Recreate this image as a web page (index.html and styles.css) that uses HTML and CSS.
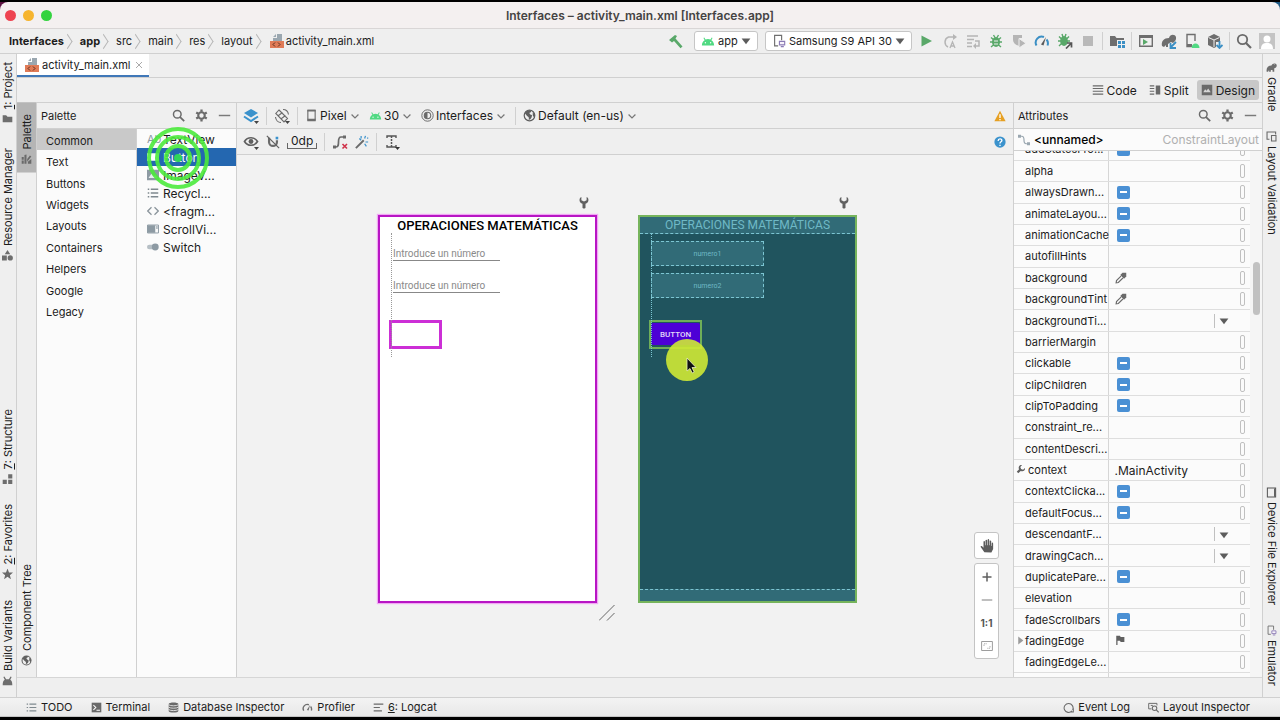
FILE: index.html
```
<!DOCTYPE html>
<html lang="en">
<head>
  <meta charset="UTF-8">
  <meta name="viewport" content="width=device-width, initial-scale=1.0">
  <title>Interfaces – activity_main.xml [Interfaces.app]</title>
  <link rel="stylesheet" href="styles.css">
</head>
<body>
  <!-- icons -->
  <svg class="sprite" aria-hidden="true">
    <symbol id="i-xml" viewBox="0 0 16 16"><path fill="#9aa7b0" d="M8 1h5v8H4V5h4zM7 1L4 4h3z"/><path fill="#e07b57" d="M1 8h14v7H1z"/><path fill="none" stroke="#5a2d1c" d="M6 9.500L4 11.500L6 13.500M9 9.500L11 11.500L9 13.500"/></symbol>
    <symbol id="i-android" viewBox="0 0 16 16"><path fill="#50d982" d="M1 13c0-3 1.500-5 3.200-6L2.800 4.500l.9-.5 1.500 2.400a7.500 7.500 0 0 1 5.600 0L12.300 4l.9.500L11.800 7C13.500 8 15 10 15 13z"/><circle cx="5" cy="10" r=".8" fill="#fff"/><circle cx="11" cy="10" r=".8" fill="#fff"/></symbol>
    <symbol id="i-hammer" viewBox="0 0 16 16"><path fill="#59a869" d="M1 7l6-5 2 1-1.500 2.500 7 8-2 1.800L6 8 4 9.500z"/></symbol>
    <symbol id="i-phone" viewBox="0 0 16 16"><path fill="none" stroke="#6e6e6e" stroke-width="1.400" d="M3.500 1.700h9v12.600h-9z"/><path fill="#6e6e6e" d="M3 1h10v2H3zM3 12h10v2H3z"/></symbol>
    <symbol id="i-vphone" viewBox="0 0 16 16"><path fill="none" stroke="#6e6e6e" stroke-width="1.300" d="M7 13.500H3v-12h8V7"/><path fill="#f7f3fb" stroke="#8b7bb5" stroke-width="1.300" d="M8.500 8.500h6v4h-6zM10 14.500h3.500"/></symbol>
    <symbol id="i-play" viewBox="0 0 16 16"><path fill="#59a869" d="M2.500 2.500v11L13 8z"/></symbol>
    <symbol id="i-rerun" viewBox="0 0 16 16"><path fill="none" stroke="#b5b5b5" stroke-width="1.500" d="M6 14A5.500 5.500 0 0 1 6.500 4H12"/><path fill="#b5b5b5" d="M11 1l4 3-4 3z"/><path fill="none" stroke="#b5b5b5" stroke-width="1.300" d="M8 15l2.500-6L13 15M9 13h3"/></symbol>
    <symbol id="i-apply" viewBox="0 0 16 16"><path fill="none" stroke="#b5b5b5" stroke-width="1.500" d="M2 3h11M2 6.500h7M2 10h5M2 13.500h5M10 8h4v5h-4"/><path fill="#b5b5b5" d="M11 10v6l-3-3z"/></symbol>
    <symbol id="i-bug" viewBox="0 0 16 16"><ellipse cx="8" cy="9" rx="4" ry="5" fill="#59a869"/><path fill="none" stroke="#59a869" stroke-width="1.400" d="M2 9h12M3 4.500l3 2.500M13 4.500L10 7M3 14l3-2.500M13 14l-3-2.500M5.500 2l1.500 2.500M10.500 2L9 4.500"/><path stroke="#efefef" d="M6 8h4M6 11h4"/></symbol>
    <symbol id="i-cover" viewBox="0 0 16 16"><path fill="#b5b5b5" d="M2 2h9v3H8v8C5 12 2 10 2 7z"/><path fill="#b5b5b5" stroke="#efefef" d="M8 5.500v9.500l7-4.700z"/></symbol>
    <symbol id="i-gauge" viewBox="0 0 16 16"><path fill="none" stroke="#3b8fc4" stroke-width="2" d="M2.500 12.500A6 6 0 0 1 10 4M12.500 6.500a6 6 0 0 1 1 6"/><path fill="#5b5b5b" d="M12 4L9.500 12.500 7 11.500z"/></symbol>
    <symbol id="i-gauge2" viewBox="0 0 16 16"><path fill="none" stroke="#6e6e6e" stroke-width="2" d="M2.500 12.500A6 6 0 0 1 10 4M12.500 6.500a6 6 0 0 1 1 6"/><path fill="#6e6e6e" d="M12 4L9.500 12.500 7 11.500z"/></symbol>
    <symbol id="i-attach" viewBox="0 0 16 16"><ellipse cx="7" cy="8" rx="3.800" ry="5" fill="#59a869"/><path fill="none" stroke="#59a869" stroke-width="1.400" d="M1 8h12M2 3.500L4.500 6M12 3.500L9.500 6M2 13l2.500-2.500M5 1l1 3M9 1L8 4"/><path fill="none" stroke="#555" stroke-width="1.700" d="M9 15.500l5-5M10 10h4.500v4.500"/></symbol>
    <symbol id="i-stop" viewBox="0 0 16 16"><path fill="#b9b9b9" d="M3 3h10v10H3z"/></symbol>
    <symbol id="i-folder" viewBox="0 0 16 16"><path fill="#6e6e6e" d="M1 3h5l2 2h7v8H1z"/></symbol>
    <symbol id="i-struct" viewBox="0 0 16 16"><path fill="#6e6e6e" d="M1 3h5l1.500 2H15v2H8v6H1z"/><path fill="#3b8fc4" d="M9 8h3v3H9zM13 8h3v3h-3zM9 12h3v3H9zM13 12h3v3h-3z"/></symbol>
    <symbol id="i-runwin" viewBox="0 0 16 16"><path fill="none" stroke="#6e6e6e" stroke-width="1.400" d="M1.700 3h12.600v10.300H1.700z"/><path fill="#6e6e6e" d="M1 2h14v3H1z"/><path fill="#59a869" d="M5 6v6l5-3z"/></symbol>
    <symbol id="i-elephant" viewBox="0 0 16 16"><path fill="#6e6e6e" d="M1 14C0 8 3 5 8 5c1-3.500 6-4 7.500-1C16 7 14 9 12 9v5H9.500v-2.500H7V14H4.500v-2.500L3 14zM11 4c1 .5 2 0 2.500-.8z"/></symbol>
    <symbol id="i-gradle" viewBox="0 0 16 16"><path fill="#6e6e6e" d="M1 13C0 8 3 5 8 5c1-4 6-4 7-1 .5 3-1 4-3 6l-2-1-3 2v3H5v-2L3 14z"/><path fill="none" stroke="#3b8fc4" stroke-width="1.800" d="M15 9l-5 5M9.500 10v5H15"/></symbol>
    <symbol id="i-avd" viewBox="0 0 16 16"><path fill="none" stroke="#6e6e6e" stroke-width="1.400" d="M7 13.500H3v-12h8V8"/><path fill="#6e6e6e" d="M3 11h5v3H3z"/><path fill="#50d982" d="M7.500 15c0-6 8-6 8 0z"/></symbol>
    <symbol id="i-sdk" viewBox="0 0 16 16"><path fill="#6e6e6e" d="M7 1l6 3v5H9v5L7 15l-6-3V4z"/><path stroke="#efefef" fill="none" d="M1.500 4.500L7 7l5.500-2.500M7 7v7"/><path fill="none" stroke="#3b8fc4" stroke-width="1.800" d="M12.500 8v7M9.500 12l3 3 3-3"/></symbol>
    <symbol id="i-search" viewBox="0 0 16 16"><circle cx="6.500" cy="6.500" r="4.700" fill="none" stroke="#6a6a6a" stroke-width="1.800"/><path stroke="#6a6a6a" stroke-width="2.200" d="M10 10l5 5"/></symbol>
    <symbol id="i-user" viewBox="0 0 16 16"><path fill="#c4c4c4" d="M0 0h16v16H0z"/><circle cx="8" cy="6" r="3.500" fill="#fff"/><path fill="#fff" d="M2 16c0-5 2.500-6 6-6s6 1 6 6z"/></symbol>
    <symbol id="i-gear" viewBox="0 0 16 16"><circle cx="8" cy="8" r="4" fill="none" stroke="#6a6a6a" stroke-width="2.600"/><path stroke="#6a6a6a" stroke-width="2.800" d="M8 .5v3M8 12.500v3M1.500 4.200l2.500 1.500M12 10.300l2.500 1.500M1.500 11.800L4 10.300M12 5.700l2.500-1.500"/></symbol>
    <symbol id="i-minus" viewBox="0 0 16 16"><path stroke="#7a7a7a" stroke-width="1.800" d="M1 8h14"/></symbol>
    <symbol id="i-plus" viewBox="0 0 16 16"><path stroke="#5f5f5f" stroke-width="2" d="M2 8h12M8 2v12"/></symbol>
    <symbol id="i-code" viewBox="0 0 16 16"><path stroke="#6a6a6a" stroke-width="1.400" d="M1 2.500h14M1 6h14M1 9.700h14M1 13.500h14"/></symbol>
    <symbol id="i-split" viewBox="0 0 16 16"><path stroke="#6a6a6a" stroke-width="1.400" d="M1 2.500h6M1 6h6M1 9.700h6M1 13.500h6"/><path fill="#6a6a6a" d="M9 2h6v12H9z"/></symbol>
    <symbol id="i-image" viewBox="0 0 16 16"><path fill="#6a6a6a" d="M1 1h14v14H1z"/><path fill="#d5d5d5" d="M3 11l2.500-4 2 2 2-3 1.500 2 2 3z"/></symbol>
    <symbol id="i-layers" viewBox="0 0 16 16"><path fill="#3b92cc" d="M8 1l7 4-7 4.500L1 5z"/><path fill="none" stroke="#3b92cc" stroke-width="2" d="M1 8.500L8 13l7-4.500"/><path fill="#444" d="M11 13h5l-2.500 3z"/></symbol>
    <symbol id="i-rotate" viewBox="0 0 16 16"><path fill="none" stroke="#6a6a6a" stroke-width="1.100" d="M5 2l8.500 8.500-3.500 3.500L1.800 5.500zM9 1.500c3 0 5 2 5.500 5M1.500 9c.3 3 2.500 5.500 5.500 5.500M4.500 7.500l4-3M7.500 10.500l4-3"/><path fill="#444" d="M11 13h5l-2.500 3z"/></symbol>
    <symbol id="i-theme" viewBox="0 0 16 16"><circle cx="8" cy="8" r="7" fill="none" stroke="#6a6a6a" stroke-width="1.200"/><circle cx="8" cy="8" r="4" fill="none" stroke="#6a6a6a" stroke-width="1.300"/><path fill="#6a6a6a" d="M8 4v8a4 4 0 0 1 0-8z"/></symbol>
    <symbol id="i-globe" viewBox="0 0 16 16"><circle cx="8" cy="8" r="6.500" fill="#efefef" stroke="#606060" stroke-width="1.500"/><path fill="#606060" d="M2 5c2-4 7-4 8-3 .5 2-1 2-2 2.500 0 2 1 2 3 3 0 2 0 3-2 5l-2 1c1-4-1-4-2-5zM12 4l3 3-1 4-2-3z"/></symbol>
    <symbol id="i-chev" viewBox="0 0 16 16"><path fill="none" stroke="#777" stroke-width="2" d="M2.500 5.500L8 11l5.500-5.500"/></symbol>
    <symbol id="i-tri" viewBox="0 0 16 16"><path fill="#5c5c5c" d="M1 4h14L8 13z"/></symbol>
    <symbol id="i-eye" viewBox="0 0 16 16"><path fill="none" stroke="#606060" stroke-width="1.700" d="M1.500 7.500c3-5 10-5 13 0-3 5-10 5-13 0z"/><circle cx="8" cy="7.500" r="2.400" fill="#606060"/><path fill="#444" d="M11 13h5l-2.500 3z"/></symbol>
    <symbol id="i-magnet" viewBox="0 0 16 16"><path fill="none" stroke="#6a6a6a" stroke-width="2.500" d="M3.500 3v5c0 6 9 6 9 0V6"/><path fill="#3b92cc" d="M11 2h3v3h-3z"/><path stroke="#606060" stroke-width="1.500" d="M1 1l14 14"/></symbol>
    <symbol id="i-clear" viewBox="0 0 16 16"><path fill="none" stroke="#6a6a6a" stroke-width="1.700" d="M2 13h2c5 0 0-10 5-10h3"/><path stroke="#d0324a" stroke-width="1.600" d="M10.500 10l4.500 4.500M15 10l-4.500 4.500"/><path fill="#6a6a6a" d="M1 11.500h3v3H1zM11 1.500h3v3h-3z"/></symbol>
    <symbol id="i-wand" viewBox="0 0 16 16"><path stroke="#6a6a6a" stroke-width="2.200" d="M1 15l9-9"/><path stroke="#3b92cc" stroke-width="1.400" d="M7 1v3M12 1l-1 3M12 8h3M11 10l2 3M14 4l1-1M5 4l2 2"/></symbol>
    <symbol id="i-guide" viewBox="0 0 16 16"><path fill="none" stroke="#555" stroke-width="1.400" d="M3 4V2h9v2M3 11v2h9v-2"/><path fill="none" stroke="#555" stroke-width="1.500" stroke-dasharray="2 1" d="M7.500 2v11"/><path fill="#333" d="M11 13h5l-2.500 3z"/></symbol>
    <symbol id="i-warn" viewBox="0 0 16 16"><path fill="#e6a023" d="M8 1l7.500 14H.5z"/><path stroke="#fff" stroke-width="1.800" d="M8 5.500v5M8 12v1.800"/></symbol>
    <symbol id="i-help" viewBox="0 0 16 16"><circle cx="8" cy="8" r="7.500" fill="#3b92cc"/><path fill="none" stroke="#fff" stroke-width="1.800" d="M5.500 6.500c0-3.500 5-3.500 5-.5 0 2-2.500 1.500-2.500 4M8 11.500v1.800"/></symbol>
    <symbol id="i-wrench" viewBox="0 0 16 16"><path fill="#606060" d="M4.500.5C1 2 1 8 6 9.500V15c0 1.300 4 1.300 4 0V9.500C15 8 15 2 11.500.5V5L8 6.500 4.500 5z"/></symbol>
    <symbol id="i-constraint" viewBox="0 0 16 16"><path fill="none" stroke="#9aa7b0" stroke-width="1.600" d="M2 3h3c6 0 0 10 6 10h3"/><path fill="#9aa7b0" d="M0 1h4v4H0zM12 11h4v4h-4z"/></symbol>
    <symbol id="i-picker" viewBox="0 0 16 16"><path fill="#6a6a6a" d="M10 1h5v5l-3 3-5-5z"/><path fill="none" stroke="#6a6a6a" stroke-width="1.500" d="M8 5.500l-6 6L1.500 14.500 4.500 14l6-6"/></symbol>
    <symbol id="i-flag" viewBox="0 0 16 16"><path fill="#606060" d="M2 1h6l1 2h6v8H9L8 9H4v7H2z"/></symbol>
    <symbol id="i-hand" viewBox="0 0 16 16"><path fill="#5c5c5c" d="M5 15L.8 9.200c-.5-1 .8-1.700 1.600-.8L4 10V3.200c0-1.200 1.600-1.200 1.700 0V7h.6V1.700c0-1.300 1.700-1.300 1.800 0V7h.6V1c.1-1.300 1.700-1.300 1.800 0v6h.6V2.500c0-1.200 1.600-1.200 1.700 0L13 8l.5 0V5c0-1.200 1.500-1.200 1.500 0v6.500L13 15.500z"/></symbol>
    <symbol id="i-fit" viewBox="0 0 16 16"><path fill="none" stroke="#9a9a9a" stroke-width="1.300" d="M.8 2h14.400v12H.800z"/><path fill="none" stroke="#9a9a9a" stroke-dasharray="2 1" d="M4 8V5h4M12 8v3H8"/></symbol>
    <symbol id="i-list" viewBox="0 0 16 16"><path stroke="#7f898f" stroke-width="1.800" d="M1 3h2M5 3h10M1 8h2M5 8h10M1 13h2M5 13h10"/></symbol>
    <symbol id="i-angle" viewBox="0 0 16 16"><path fill="none" stroke="#8a949b" stroke-width="1.700" d="M6 3L1 8l5 5M10 3l5 5-5 5"/></symbol>
    <symbol id="i-scroll" viewBox="0 0 16 16"><path fill="none" stroke="#8d9aa3" stroke-width="1.300" d="M.7 2.700h14.600v10.600H.7z"/><path fill="#8d9aa3" d="M1 3h10v10H1zM12.500 4h1.500v4h-1.500z"/></symbol>
    <symbol id="i-switch" viewBox="0 0 16 16"><path fill="#b6bfc5" d="M3 5h7v6H3a3 3 0 0 1 0-6z"/><circle cx="11" cy="8" r="4.600" fill="#8d9aa3"/></symbol>
    <symbol id="i-btn" viewBox="0 0 16 16"><path fill="#fff" d="M0 3h16v10H0z"/></symbol>
    <symbol id="i-pic" viewBox="0 0 16 16"><path fill="#8d9aa3" d="M0 1h16v14H0z"/><path fill="#e9edef" d="M2 12l4-6 3 4 2-2 3 4z"/></symbol>
    <symbol id="i-res" viewBox="0 0 16 16"><path fill="#6e6e6e" d="M8 0l4 6H4zM0 8h7v7H0z"/><circle cx="12" cy="11.500" r="3.800" fill="#6e6e6e"/></symbol>
    <symbol id="i-blocks" viewBox="0 0 16 16"><path fill="#6e6e6e" d="M9 1h6v6H9zM1 9h6v6H1zM9 9h6v6H9z"/></symbol>
    <symbol id="i-star" viewBox="0 0 16 16"><path fill="#6a6a6a" d="M8 0l2.200 5.700 5.800.3-4.500 3.700L13 15.500 8 12.200 3 15.500l1.500-5.800L0 6l5.800-.3z"/></symbol>
    <symbol id="i-variants" viewBox="0 0 16 16"><path fill="#6e6e6e" d="M1 15c0-5 1-7 3-8L2 3l1.500-.8L6 6h4l2.500-3.800L14 3l-2 4c2 1 3 3 3 8z"/></symbol>
    <symbol id="i-swatch" viewBox="0 0 16 16"><path fill="#6a6a6a" d="M1 10h3v5H1zM1 5h3v4H1zM5 2l3-.5V15H5zM9 8l4-5 2 1.500L9 12zM10 12l5-4v7h-5z"/></symbol>
    <symbol id="i-layval" viewBox="0 0 16 16"><path fill="none" stroke="#6a6a6a" stroke-width="1.600" d="M5 12H1.500V1.500H14V5M8 6.500h6.500v8H8z"/></symbol>
    <symbol id="i-device" viewBox="0 0 16 16"><path fill="none" stroke="#555" stroke-width="1.500" d="M2 1.500h12v13H2z"/><path stroke="#555" stroke-width="1.500" d="M12.500 2v12"/></symbol>
    <symbol id="i-term" viewBox="0 0 16 16"><path fill="#6a6a6a" d="M1 1h14v14H1z"/><path fill="none" stroke="#fff" stroke-width="1.500" d="M3.500 4.500L7 8l-3.500 3.500M8 12h5"/></symbol>
    <symbol id="i-db" viewBox="0 0 16 16"><path fill="#6a6a6a" d="M1 3c0-3 14-3 14 0v10c0 3-14 3-14 0z"/><path fill="none" stroke="#efefef" stroke-width="1.200" d="M1 4c2 2 12 2 14 0M1 7.500c2 2 12 2 14 0M1 11c2 2 12 2 14 0"/></symbol>
    <symbol id="i-logcat" viewBox="0 0 16 16"><path stroke="#6a6a6a" stroke-width="1.800" d="M1 3h14M1 8h9M1 13h12"/></symbol>
    <symbol id="i-event" viewBox="0 0 16 16"><path fill="none" stroke="#6a6a6a" stroke-width="1.500" d="M13 13a6.500 6.500 0 1 1 1-1.500M10 14.500h5V9"/></symbol>
    <symbol id="i-inspect" viewBox="0 0 16 16"><path fill="none" stroke="#6a6a6a" stroke-width="1.400" d="M5 10H1V2h12v3M4 5h3"/><circle cx="9.500" cy="9" r="3.300" fill="none" stroke="#6a6a6a" stroke-width="1.500"/><path stroke="#6a6a6a" stroke-width="1.700" d="M12 11.500l3.500 3.500"/></symbol>
  </svg>

  <div class="window">
    <header class="titlebar">
      <div class="lights"><i class="red"></i><i class="yellow"></i><i class="green"></i></div>
      <h1>Interfaces – activity_main.xml [Interfaces.app]</h1>
    </header>

    <div class="navbar">
      <nav class="crumbs">
        <a href="#"><b>Interfaces</b></a>
        <a href="#"><b>app</b></a>
        <a href="#">src</a>
        <a href="#">main</a>
        <a href="#">res</a>
        <a href="#">layout</a>
        <a href="#"><svg class="ic"><use href="#i-xml"/></svg>activity_main.xml</a>
      </nav>
      <div class="tools">
        <button aria-label="Build"><svg class="ic"><use href="#i-hammer"/></svg></button>
        <div class="combo first">
          <svg class="ic"><use href="#i-android"/></svg>
          <select aria-label="Configuration"><option>app</option></select>
          <svg class="arrow"><use href="#i-tri"/></svg>
        </div>
        <div class="combo">
          <svg class="ic"><use href="#i-vphone"/></svg>
          <select aria-label="Device"><option>Samsung S9 API 30</option></select>
          <svg class="arrow"><use href="#i-tri"/></svg>
        </div>
        <button aria-label="Run"><svg class="ic"><use href="#i-play"/></svg></button>
        <button aria-label="Apply changes"><svg class="ic"><use href="#i-rerun"/></svg></button>
        <button aria-label="Apply code changes"><svg class="ic"><use href="#i-apply"/></svg></button>
        <button aria-label="Debug"><svg class="ic"><use href="#i-bug"/></svg></button>
        <button aria-label="Coverage"><svg class="ic"><use href="#i-cover"/></svg></button>
        <button aria-label="Profile"><svg class="ic"><use href="#i-gauge"/></svg></button>
        <button aria-label="Attach debugger"><svg class="ic"><use href="#i-attach"/></svg></button>
        <button aria-label="Stop"><svg class="ic"><use href="#i-stop"/></svg></button>
        <span class="sep"></span>
        <button aria-label="Project structure"><svg class="ic"><use href="#i-struct"/></svg></button>
        <span class="sep"></span>
        <button aria-label="Run window"><svg class="ic"><use href="#i-runwin"/></svg></button>
        <button aria-label="Sync Gradle"><svg class="ic"><use href="#i-gradle"/></svg></button>
        <button aria-label="AVD Manager"><svg class="ic"><use href="#i-avd"/></svg></button>
        <button aria-label="SDK Manager"><svg class="ic"><use href="#i-sdk"/></svg></button>
        <span class="sep"></span>
        <button aria-label="Search"><svg class="ic"><use href="#i-search"/></svg></button>
        <button aria-label="Account"><svg class="ic"><use href="#i-user"/></svg></button>
      </div>
    </div>

    <div class="workspace">
      <aside class="stripe left">
        <div class="group">
          <button><svg><use href="#i-folder"/></svg><span><u>1</u>: Project</span></button>
          <button><svg><use href="#i-res"/></svg><span>Resource Manager</span></button>
        </div>
        <button class="push"><svg><use href="#i-blocks"/></svg><span><u>7</u>: Structure</span></button>
        <button><svg><use href="#i-star"/></svg><span><u>2</u>: Favorites</span></button>
        <button><svg><use href="#i-variants"/></svg><span>Build Variants</span></button>
      </aside>

      <main class="editor">
        <div class="tabs">
          <div class="tab">
            <svg class="ic"><use href="#i-xml"/></svg>
            <a href="#">activity_main.xml</a>
            <button class="close" aria-label="Close"><svg viewBox="0 0 8 8"><path stroke="#aaa" d="M1 1l6 6M7 1L1 7"/></svg></button>
          </div>
        </div>
        <div class="modes">
          <button><svg><use href="#i-code"/></svg>Code</button>
          <button><svg><use href="#i-split"/></svg>Split</button>
          <button class="current"><svg><use href="#i-image"/></svg>Design</button>
        </div>

        <div class="panels">
          <aside class="stripe left inner">
            <button class="current"><svg><use href="#i-swatch"/></svg><span>Palette</span></button>
            <button class="push"><svg><use href="#i-globe"/></svg><span>Component Tree</span></button>
          </aside>

          <section class="palette">
            <div class="head">
              <h2>Palette</h2>
              <button aria-label="Search palette"><svg><use href="#i-search"/></svg></button>
              <button aria-label="Palette settings"><svg><use href="#i-gear"/></svg></button>
              <button aria-label="Hide palette"><svg><use href="#i-minus"/></svg></button>
            </div>
            <div class="lists">
              <ul class="groups">
                <li class="current">Common</li>
                <li>Text</li>
                <li>Buttons</li>
                <li>Widgets</li>
                <li>Layouts</li>
                <li>Containers</li>
                <li>Helpers</li>
                <li>Google</li>
                <li>Legacy</li>
              </ul>
              <ul class="items">
                <li><span class="ab">Ab</span>TextView</li>
                <li class="current"><svg><use href="#i-btn"/></svg>Button</li>
                <li><svg><use href="#i-pic"/></svg>ImageV...</li>
                <li><svg><use href="#i-list"/></svg>Recycl...</li>
                <li><svg><use href="#i-angle"/></svg>&lt;fragm...</li>
                <li><svg><use href="#i-scroll"/></svg>ScrollVi...</li>
                <li><svg><use href="#i-switch"/></svg>Switch</li>
              </ul>
              <!-- click ripple -->
              <svg class="ripple" viewBox="0 0 64 64"><g fill="none" stroke="#4bea3c" stroke-width="4" stroke-opacity=".9"><circle cx="32" cy="32" r="29"/><circle cx="32" cy="32" r="21"/><circle cx="32" cy="32" r="12"/></g><circle cx="32" cy="32" r="4" fill="#2fd65a"/></svg>
            </div>
          </section>

          <section class="design">
            <div class="bar">
              <button aria-label="Surface"><svg class="ic"><use href="#i-layers"/></svg></button>
              <span class="sep"></span>
              <button aria-label="Orientation"><svg class="ic"><use href="#i-rotate"/></svg></button>
              <span class="sep"></span>
              <div class="drop"><svg><use href="#i-phone"/></svg><select aria-label="Device type"><option>Pixel</option></select><svg class="chev"><use href="#i-chev"/></svg></div>
              <div class="drop"><svg><use href="#i-android"/></svg><select aria-label="API level"><option>30</option></select><svg class="chev"><use href="#i-chev"/></svg></div>
              <div class="drop"><svg><use href="#i-theme"/></svg><select aria-label="Theme"><option>Interfaces</option></select><svg class="chev"><use href="#i-chev"/></svg></div>
              <span class="sep"></span>
              <div class="drop"><svg><use href="#i-globe"/></svg><select aria-label="Locale"><option>Default (en-us)</option></select><svg class="chev"><use href="#i-chev"/></svg></div>
              <button class="end" aria-label="Warnings"><svg><use href="#i-warn"/></svg></button>
            </div>
            <div class="bar">
              <button aria-label="View options"><svg class="ic"><use href="#i-eye"/></svg></button>
              <button aria-label="Autoconnect"><svg class="mid"><use href="#i-magnet"/></svg></button>
              <button class="margin">0dp</button>
              <span class="sep"></span>
              <button aria-label="Clear constraints"><svg class="ic"><use href="#i-clear"/></svg></button>
              <button aria-label="Infer constraints"><svg class="mid"><use href="#i-wand"/></svg></button>
              <span class="sep"></span>
              <button aria-label="Guidelines"><svg class="ic"><use href="#i-guide"/></svg></button>
              <button class="end" aria-label="Help"><svg><use href="#i-help"/></svg></button>
            </div>

            <div class="canvas">
              <div class="screen">
                <svg class="wrench"><use href="#i-wrench"/></svg>
                <div class="phone preview">
                  <h3>OPERACIONES MATEMÁTICAS</h3>
                  <i class="guide"></i>
                  <input type="text" placeholder="Introduce un número" aria-label="numero1">
                  <input type="text" placeholder="Introduce un número" aria-label="numero2">
                  <div class="picked"></div>
                </div>
                <svg class="resize" viewBox="0 0 16 16"><path stroke="#666" d="M0 15.500L15.500 0M8 15.500L15.500 8"/></svg>
              </div>
              <div class="screen">
                <svg class="wrench"><use href="#i-wrench"/></svg>
                <div class="phone blueprint">
                  <h3>OPERACIONES MATEMÁTICAS</h3>
                  <i class="guide"></i>
                  <div class="box">numero1</div>
                  <div class="box">numero2</div>
                  <div class="picked"><button>BUTTON</button></div>
                  <div class="foot"></div>
                  <svg class="pointer" viewBox="0 0 42 42"><circle cx="21" cy="21" r="21" fill="#cfe935" fill-opacity=".9"/><path fill="#111" stroke="#e8f0c0" stroke-width=".8" d="M21 19v13l3-2.500 2.200 4.500 2-1-2.200-4.500h4z"/></svg>
                </div>
              </div>

              <div class="zoom">
                <div class="pad"><button aria-label="Pan"><svg class="mid"><use href="#i-hand"/></svg></button></div>
                <div class="pad">
                  <button aria-label="Zoom in"><svg><use href="#i-plus"/></svg></button>
                  <button aria-label="Zoom out"><svg class="off"><use href="#i-minus"/></svg></button>
                  <button>1:1</button>
                  <button aria-label="Zoom to fit"><svg><use href="#i-fit"/></svg></button>
                </div>
              </div>
            </div>
          </section>

          <section class="attributes">
            <div class="head">
              <h2>Attributes</h2>
              <button aria-label="Search attributes"><svg><use href="#i-search"/></svg></button>
              <button aria-label="Attribute settings"><svg><use href="#i-gear"/></svg></button>
              <button aria-label="Hide attributes"><svg><use href="#i-minus"/></svg></button>
            </div>
            <div class="component"><svg><use href="#i-constraint"/></svg><b>&lt;unnamed&gt;</b><span>ConstraintLayout</span></div>
            <div class="scroll">
              <table>
                <tr><th><label for="a0">addStatesFro...</label></th><td><input type="checkbox" id="a0"></td><td><button aria-label="Pick"></button></td></tr>
                <tr><th><label for="a1">alpha</label></th><td><input type="text" id="a1"></td><td><button aria-label="Pick"></button></td></tr>
                <tr><th><label for="a2">alwaysDrawn...</label></th><td><input type="checkbox" id="a2"></td><td><button aria-label="Pick"></button></td></tr>
                <tr><th><label for="a3">animateLayou...</label></th><td><input type="checkbox" id="a3"></td><td><button aria-label="Pick"></button></td></tr>
                <tr><th><label for="a4">animationCache</label></th><td><input type="checkbox" id="a4"></td><td><button aria-label="Pick"></button></td></tr>
                <tr><th><label for="a5">autofillHints</label></th><td><input type="text" id="a5"></td><td><button aria-label="Pick"></button></td></tr>
                <tr><th><label for="a6">background</label></th><td class="icon"><svg><use href="#i-picker"/></svg><input type="text" id="a6"></td><td><button aria-label="Pick"></button></td></tr>
                <tr><th><label for="a7">backgroundTint</label></th><td class="icon"><svg><use href="#i-picker"/></svg><input type="text" id="a7"></td><td><button aria-label="Pick"></button></td></tr>
                <tr><th><label for="a8">backgroundTi...</label></th><td colspan="2" class="choice"><select id="a8"><option></option></select><svg><use href="#i-tri"/></svg></td></tr>
                <tr><th><label for="a9">barrierMargin</label></th><td><input type="text" id="a9"></td><td><button aria-label="Pick"></button></td></tr>
                <tr><th><label for="a10">clickable</label></th><td><input type="checkbox" id="a10"></td><td><button aria-label="Pick"></button></td></tr>
                <tr><th><label for="a11">clipChildren</label></th><td><input type="checkbox" id="a11"></td><td><button aria-label="Pick"></button></td></tr>
                <tr><th><label for="a12">clipToPadding</label></th><td><input type="checkbox" id="a12"></td><td><button aria-label="Pick"></button></td></tr>
                <tr><th><label for="a13">constraint_re...</label></th><td><input type="text" id="a13"></td><td><button aria-label="Pick"></button></td></tr>
                <tr><th><label for="a14">contentDescri...</label></th><td><input type="text" id="a14"></td><td><button aria-label="Pick"></button></td></tr>
                <tr><th class="tool"><svg><use href="#i-wrench"/></svg><label for="a15">context</label></th><td><input type="text" id="a15" value=".MainActivity"></td><td><button aria-label="Pick"></button></td></tr>
                <tr><th><label for="a16">contextClicka...</label></th><td><input type="checkbox" id="a16"></td><td><button aria-label="Pick"></button></td></tr>
                <tr><th><label for="a17">defaultFocus...</label></th><td><input type="checkbox" id="a17"></td><td><button aria-label="Pick"></button></td></tr>
                <tr><th><label for="a18">descendantF...</label></th><td colspan="2" class="choice"><select id="a18"><option></option></select><svg><use href="#i-tri"/></svg></td></tr>
                <tr><th><label for="a19">drawingCach...</label></th><td colspan="2" class="choice"><select id="a19"><option></option></select><svg><use href="#i-tri"/></svg></td></tr>
                <tr><th><label for="a20">duplicatePare...</label></th><td><input type="checkbox" id="a20"></td><td><button aria-label="Pick"></button></td></tr>
                <tr><th><label for="a21">elevation</label></th><td><input type="text" id="a21"></td><td><button aria-label="Pick"></button></td></tr>
                <tr><th><label for="a22">fadeScrollbars</label></th><td><input type="checkbox" id="a22"></td><td><button aria-label="Pick"></button></td></tr>
                <tr><th class="tree"><svg><use href="#i-tri"/></svg><label for="a23">fadingEdge</label></th><td class="icon flag"><svg><use href="#i-flag"/></svg><input type="text" id="a23"></td><td><button aria-label="Pick"></button></td></tr>
                <tr><th><label for="a24">fadingEdgeLe...</label></th><td><input type="text" id="a24"></td><td><button aria-label="Pick"></button></td></tr>
                <tr><th></th><td></td><td><button aria-label="Pick"></button></td></tr>
              </table>
              <div class="track"><i></i></div>
            </div>
          </section>
        </div>
      </main>

      <aside class="stripe right">
        <button><svg><use href="#i-elephant"/></svg><span>Gradle</span></button>
        <button><svg><use href="#i-layval"/></svg><span>Layout Validation</span></button>
        <button class="push"><svg><use href="#i-device"/></svg><span>Device File Explorer</span></button>
        <button><svg><use href="#i-vphone"/></svg><span>Emulator</span></button>
      </aside>
    </div>

    <footer class="status">
      <button><svg><use href="#i-list"/></svg>TODO</button>
      <button><svg><use href="#i-term"/></svg>Terminal</button>
      <button><svg><use href="#i-db"/></svg>Database Inspector</button>
      <button><svg><use href="#i-gauge2"/></svg>Profiler</button>
      <button><svg><use href="#i-logcat"/></svg><span><u>6</u>: Logcat</span></button>
      <button class="push"><svg><use href="#i-event"/></svg>Event Log</button>
      <button><svg><use href="#i-inspect"/></svg>Layout Inspector</button>
    </footer>
  </div>
</body>
</html>
```

FILE: styles.css
```
* {
  margin: 0;
  padding: 0;
  box-sizing: border-box;
}
body {
  font-family: Inter, "Liberation Sans", sans-serif;
  font-size: 11px;
  color: #1c1c1c;
  background: linear-gradient(to right, #5a1040, #1f5a85);
}
button, select, input {
  font: inherit;
  color: inherit;
  border: 0;
  background: none;
  outline: 0;
}
select, input {
  appearance: none;
}
button {
  display: flex;
  align-items: center;
  white-space: nowrap;
}
a {
  color: inherit;
  text-decoration: none;
}
ul {
  list-style: none;
}
svg {
  display: block;
  flex: none;
  width: 12px;
  height: 12px;
}
.ic {
  width: 16px;
  height: 16px;
}
.mid {
  width: 14px;
  height: 14px;
}
.sprite {
  display: none;
}
.sep {
  width: 1px;
  height: 18px;
  background: #d0d0d0;
}
.push {
  margin-top: auto;
}

/* window */
.window {
  display: flex;
  flex-direction: column;
  height: 100vh;
  border-top: 2px solid #000;
  border-bottom: 3px solid #000;
}
.titlebar {
  display: grid;
  grid-template-columns: 1fr auto 1fr;
  align-items: center;
  height: 27px;
  padding: 0 5px;
  background: #f4f0f0;
  border-bottom: 1px solid #d9d6d6;
  border-radius: 8px 8px 0 0;
}
.titlebar h1 {
  font-size: 12px;
  font-weight: 600;
  color: #454343;
}
.lights {
  display: flex;
  gap: 7px;
}
.lights i {
  width: 11px;
  height: 11px;
  border-radius: 50%;
}
.lights .red { background: #ee4350; }
.lights .yellow { background: #f6b42e; }
.lights .green { background: #33d33f; }

/* navigation bar */
.navbar {
  display: flex;
  justify-content: space-between;
  align-items: center;
  height: 25px;
  padding: 0 5px 0 9px;
  background: #efefef;
  border-bottom: 1px solid #d0d0d0;
}
.crumbs {
  display: flex;
  align-items: center;
}
.crumbs a {
  display: flex;
  align-items: center;
  gap: 1px;
}
.crumbs a + a::before {
  content: "";
  width: 8px;
  height: 8px;
  margin: 0 7px 0 -1px;
  border: 1px solid #b5b5b5;
  border-width: 1px 1px 0 0;
  transform: rotate(45deg) skew(12deg, 12deg);
}
.tools {
  display: flex;
  align-items: center;
  gap: 7px;
}
.tools .sep {
  margin: 0 -1px;
}
.combo {
  display: flex;
  align-items: center;
  gap: 3px;
  height: 20px;
  padding: 0 6px;
  background: #fff;
  border: 1px solid #c6c6c6;
  border-radius: 3px;
}
.combo.first {
  margin-left: 3px;
}
.combo .ic {
  width: 14px;
  height: 14px;
}
.arrow {
  width: 10px;
  height: 10px;
}

/* tool window stripes */
.workspace {
  display: flex;
  flex: 1;
  min-height: 0;
}
.stripe {
  display: flex;
  flex-direction: column;
  gap: 20px;
  width: 17px;
  padding: 8px 0 11px;
  background: #efefef;
}
.stripe .group {
  display: flex;
  flex-direction: column;
  gap: 24px;
}
.stripe button {
  writing-mode: vertical-rl;
  gap: 4px;
  width: 100%;
}
.stripe svg {
  width: 11px;
  height: 11px;
}
.stripe.left {
  border-right: 1px solid #d0d0d0;
}
.stripe.left button {
  transform: rotate(180deg);
}
.stripe.left svg {
  transform: rotate(180deg);
}
.stripe.right {
  width: 18px;
  border-left: 1px solid #d0d0d0;
}
.stripe.inner {
  width: 20px;
  padding-top: 0;
}
.stripe.inner .current {
  padding: 8px 0 11px;
  background: #b5b5b5;
}

/* editor */
.editor {
  display: flex;
  flex-direction: column;
  flex: 1;
  min-width: 0;
  padding-bottom: 19px;
  background: #efefef;
}
.tabs {
  display: flex;
  height: 24px;
  border-bottom: 1px solid #d0d0d0;
}
.tab {
  display: flex;
  align-items: center;
  gap: 2px;
  padding: 0 6px 0 7px;
  background: #fff;
  border-bottom: 2px solid #4078b8;
}
.close {
  margin-left: 2px;
}
.close svg {
  width: 8px;
  height: 8px;
}
.modes {
  display: flex;
  justify-content: flex-end;
  align-items: center;
  gap: 4px;
  height: 25px;
  padding-right: 3px;
  font-size: 12px;
  border-bottom: 1px solid #d0d0d0;
}
.modes button {
  gap: 3px;
  height: 20px;
  padding: 0 4px;
  border-radius: 3px;
}
.modes .current {
  background: #c8c8c8;
}
.panels {
  display: flex;
  flex: 1;
  min-height: 0;
  border-bottom: 1px solid #d6d6d6;
}
.head {
  display: flex;
  align-items: center;
  gap: 10px;
  height: 26px;
  padding: 0 5px 0 4px;
  background: #efefef;
  border-bottom: 1px solid #d0d0d0;
}
.head h2 {
  flex: 1;
  font-size: 11px;
  font-weight: 400;
}
.head svg {
  width: 13px;
  height: 13px;
}

/* palette */
.palette {
  display: flex;
  flex-direction: column;
  width: 200px;
  border-right: 1px solid #d0d0d0;
}
.lists {
  position: relative;
  display: flex;
  flex: 1;
  background: #fbfbfb;
}
.groups {
  display: grid;
  grid-auto-rows: 1fr;
  align-self: flex-start;
  width: 99px;
  height: 193px;
}
.groups li {
  display: flex;
  align-items: center;
  padding: 2px 0 0 9px;
}
.groups .current {
  background: #c9c9c9;
}
.items {
  flex: 1;
  padding-top: 1px;
  font-size: 12px;
  border-left: 1px solid #d0d0d0;
}
.items li {
  display: flex;
  align-items: center;
  gap: 4px;
  height: 18px;
  padding-left: 10px;
}
.items .current {
  color: #fff;
  background: #2467b0;
}
.items .ab {
  width: 12px;
  font-size: 11px;
  color: #8d9aa3;
}
.ripple {
  position: absolute;
  top: -3px;
  left: 109px;
  width: 64px;
  height: 64px;
}

/* design surface */
.design {
  display: flex;
  flex-direction: column;
  flex: 1;
  min-width: 0;
}
.bar {
  display: flex;
  align-items: center;
  gap: 7px;
  height: 26px;
  padding: 0 7px 0 6px;
  font-size: 12px;
  border-bottom: 1px solid #d0d0d0;
}
.bar .end {
  margin-left: auto;
}
.drop {
  display: flex;
  align-items: center;
  gap: 2px;
  margin-right: 2px;
}
.drop svg {
  width: 13px;
  height: 13px;
}
.drop .chev {
  width: 10px;
  height: 10px;
  margin-left: 1px;
}
/* default margin: a ruler under the value */
.margin {
  height: 15px;
  padding: 0 4px 2px;
  background:
    linear-gradient(#666, #666) left bottom / 1px 5px no-repeat,
    linear-gradient(#666, #666) right bottom / 1px 5px no-repeat;
  border-bottom: 1px solid #666;
}
.canvas {
  position: relative;
  display: flex;
  justify-content: center;
  align-items: flex-start;
  gap: 41px;
  flex: 1;
  padding: 41px 15px 0 0;
  background: #f2f2f2;
}
.screen {
  position: relative;
  display: flex;
  flex-direction: column;
}
.wrench {
  align-self: flex-end;
  height: 13px;
  margin: 0 7px 6px 0;
}
.resize {
  position: absolute;
  right: -18px;
  bottom: -18px;
  width: 16px;
  height: 16px;
}
.phone {
  position: relative;
  display: flex;
  flex-direction: column;
  align-items: flex-start;
  gap: 7px;
  width: 219px;
  height: 388px;
  font-family: Roboto, sans-serif;
  border: 2px solid #b816c4;
}
.phone h3 {
  align-self: stretch;
  height: 17px;
  font-size: 13px;
  line-height: 17px;
  font-weight: 500;
  text-align: center;
}
.preview {
  background: #fff;
  box-shadow: 0 0 1px 1px #f0a8f4;
}
.preview h3 {
  color: #000;
}
.guide {
  position: absolute;
  top: 16px;
  left: 11px;
  height: 124px;
  border-left: 1px dotted #999;
}
.preview input {
  width: 107px;
  height: 20px;
  margin: 0 0 5px 13px;
  padding-top: 5px;
  font-size: 10px;
  border-bottom: 1px solid #888;
}
.preview input::placeholder {
  color: #8a8a8a;
}
.picked {
  width: 53px;
  height: 29px;
  margin: 15px 0 0 9px;
  border: 3px solid #cc2fd6;
}
.blueprint {
  color: #6fb9c6;
  background: #20545e;
  border-color: #76b45c;
}
.blueprint h3 {
  font-size: 12px;
  font-weight: 400;
  background: #316b77;
  border-bottom: 1px dashed #7cc5d2;
}
.blueprint .guide {
  border-color: #7cc5d2;
}
.box {
  width: 113px;
  height: 25px;
  margin-left: 11px;
  font-size: 7px;
  line-height: 24px;
  text-align: center;
  background: #316b77;
  border: 1px dashed #7cc5d2;
}
.blueprint .picked {
  border: 2px solid #6fae58;
}
.picked button {
  justify-content: center;
  width: 100%;
  height: 22px;
  margin-top: 1px;
  font-size: 8px;
  font-weight: 500;
  color: #e4d9fa;
  background: #4d00d6;
  border-radius: 2px;
}
.foot {
  align-self: stretch;
  height: 12px;
  margin-top: auto;
  background: #316b77;
  border-top: 1px dashed #7cc5d2;
}
.pointer {
  position: absolute;
  top: 122px;
  left: 26px;
  width: 42px;
  height: 42px;
}
.zoom {
  position: absolute;
  right: 14px;
  bottom: 18px;
  display: flex;
  flex-direction: column;
  gap: 4px;
}
.pad {
  width: 25px;
  padding: 1px 0;
  background: #fff;
  border: 1px solid #c4c4c4;
  border-radius: 3px;
}
.pad button {
  justify-content: center;
  width: 100%;
  height: 23px;
  font-size: 10px;
  font-weight: 700;
  color: #555;
}
.off {
  opacity: .7;
}

/* attributes */
.attributes {
  display: flex;
  flex-direction: column;
  width: 249px;
  background: #f5f5f5;
  border-left: 1px solid #d0d0d0;
}
.component {
  display: flex;
  align-items: center;
  gap: 4px;
  height: 22px;
  padding: 0 3px 0 4px;
  font-size: 12px;
  background: #fbfbfb;
  border-bottom: 1px solid #d0d0d0;
}
.component b {
  font-weight: 500;
  color: #000;
}
.component span {
  margin-left: auto;
  color: #b0b0b0;
}
.scroll {
  position: relative;
  display: flex;
  flex: 1;
  min-height: 0;
  overflow: hidden;
}
.scroll table {
  flex: none;
  width: 236px;
  height: 556px;
  margin-top: -12px;
  table-layout: fixed;
  border-collapse: collapse;
  background: #fbfbfb;
}
th, td {
  height: 21px;
  text-align: left;
  font-weight: 400;
  white-space: nowrap;
  vertical-align: middle;
  border-bottom: 1px solid #dedede;
}
th {
  width: 94px;
  padding-left: 11px;
  border-right: 1px solid #d6d6d6;
}
td:last-child {
  width: 15px;
}
td input[type="text"] {
  display: block;
  width: 100%;
  height: 16px;
  padding-left: 6px;
  font-size: 12px;
}
td input[type="checkbox"] {
  display: block;
  width: 13px;
  height: 13px;
  margin-left: 8px;
  background: linear-gradient(#fff, #fff) center / 7px 2px no-repeat #4a90d4;
  border-radius: 2px;
}
td button {
  width: 5px;
  height: 14px;
  margin-left: 5px;
  border: 1px solid #c0c0c0;
  border-radius: 2px;
}
td.icon {
  padding-left: 6px;
}
td.icon svg {
  float: left;
  margin-top: 2px;
}
td.icon input[type="text"] {
  width: 80px;
}
td.flag svg {
  width: 10px;
  height: 10px;
}
td.choice {
  position: relative;
}
.choice select {
  display: block;
  width: 106px;
  height: 14px;
  border-right: 1px solid #c0c0c0;
}
.choice svg {
  position: absolute;
  top: 6px;
  right: 21px;
  width: 10px;
  height: 10px;
}
th.tool, th.tree {
  padding-left: 2px;
}
th.tool svg, th.tree svg {
  float: left;
  width: 9px;
  height: 9px;
  margin-top: 2px;
}
th.tool svg {
  margin-right: 3px;
  transform: rotate(45deg);
}
th.tree svg {
  opacity: .6;
  transform: rotate(-90deg);
}
.track {
  flex: 1;
}
.track i {
  display: block;
  width: 7px;
  height: 53px;
  margin: 111px 0 0 3px;
  background: #c1c1c1;
  border-radius: 4px;
}

/* status bar */
.status {
  display: flex;
  align-items: center;
  gap: 18px;
  height: 20px;
  padding: 0 30px 0 26px;
  background: linear-gradient(#f3f3f3, #e8e8e8);
  border-top: 1px solid #d0d0d0;
  border-bottom: 1px solid #c4c4c4;
}
.status button {
  gap: 4px;
}
.status svg {
  width: 11px;
  height: 11px;
}
.status .push {
  margin: 0 0 0 auto;
}
```
